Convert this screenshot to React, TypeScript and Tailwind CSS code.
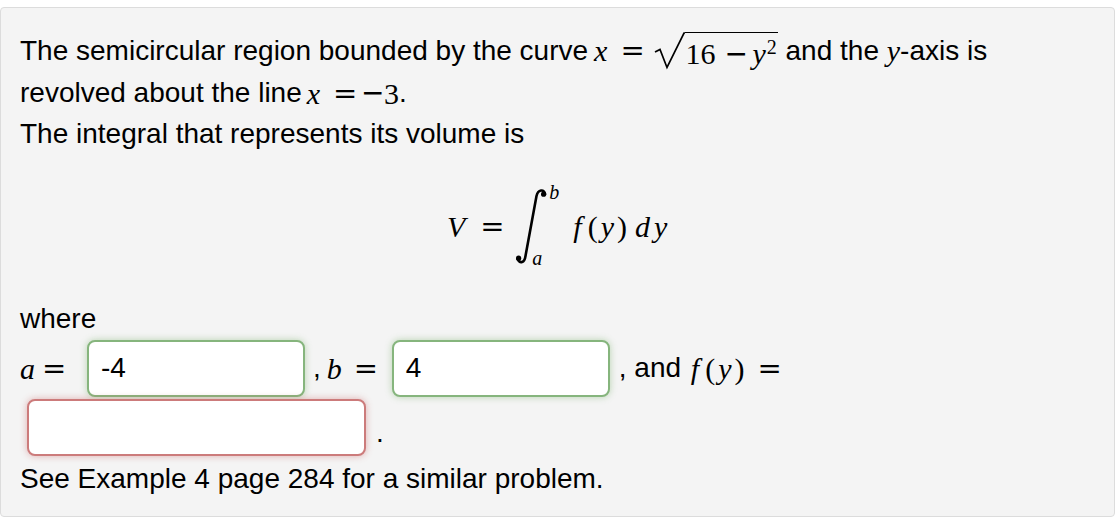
import React from "react";

const serif = { fontFamily: '"Liberation Serif", "DejaVu Serif", serif' };
const symFont = { fontFamily: '"DejaVu Sans", sans-serif' };

function MI({ children, className = "" }: { children: React.ReactNode; className?: string }) {
  return (
    <span className={"italic text-[30px] " + className} style={serif}>
      {children}
    </span>
  );
}
function MR({ children, className = "" }: { children: React.ReactNode; className?: string }) {
  return (
    <span className={"text-[30px] " + className} style={serif}>
      {children}
    </span>
  );
}
function Eq({ className = "" }: { className?: string }) {
  return (
    <span className={"inline-block w-[22px] text-center text-[29px] leading-none " + className} style={symFont}>
      =
    </span>
  );
}
function Minus({ className = "" }: { className?: string }) {
  return (
    <span className={"inline-block w-[20px] text-center text-[28px] leading-none " + className} style={symFont}>
      −
    </span>
  );
}

function Fy({ className = "" }: { className?: string }) {
  return (
    <span className={"inline-flex items-baseline " + className}>
      <MI>f</MI>
      <MR className="ml-[6px]">(</MR>
      <MI className="ml-[3px]">y</MI>
      <MR className="ml-[3px]">)</MR>
    </span>
  );
}

function Integral() {
  return (
    <svg width="32" height="76" viewBox="0 0 32 76" className="block">
      <path
        d="M30 6 C29 1 23 1 21.5 8 L10.5 68 C9.5 75 5 76 2.5 71"
        fill="none"
        stroke="#000"
        strokeWidth="2.6"
        strokeLinecap="round"
      />
      <circle cx="28.6" cy="6.2" r="2.6" />
      <circle cx="3.6" cy="70.2" r="2.6" />
    </svg>
  );
}

export default function App() {
  return (
    <div
      className="w-[1116px] h-[520px] bg-white pt-[7px]"
      style={{ fontFamily: '"Liberation Sans", Arial, sans-serif' }}
    >
      <div className="w-[1115px] h-[510px] bg-[#f4f4f4] border border-[#dcdcdc] rounded-[4px] pl-[19px] pt-[21px] text-[28px] text-black">
        {/* line 1 */}
        <div className="h-[43px] flex items-center whitespace-pre">
          <span>The semicircular region bounded by the curve</span>
          <MI className="ml-[6px]">x</MI>
          <Eq className="ml-[13px]" />
          <span className="relative inline-flex items-center ml-[12px] h-[43px]">
            <svg width="31" height="38" viewBox="0 0 31 38" className="block self-start mt-[3px]">
              <path d="M1 20 L6 17.5 L13 35.5 L30 1 L31 1" fill="none" stroke="#000" strokeWidth="1.7" />
            </svg>
            <span className="flex items-center self-start mt-[3px] h-[38px] border-t-[1.7px] border-black pr-[1px]">
              <MR className="mt-[4px]">16</MR>
              <Minus className="ml-[9px] mt-[4px]" />
              <MI className="ml-[8px] mt-[4px]">y</MI>
              <span className="text-[20px] leading-none self-start mt-[4px] ml-[1px]" style={serif}>
                2
              </span>
            </span>
          </span>
          <span> and the </span>
          <MI>y</MI>
          <span>-axis is</span>
        </div>
        {/* line 2 */}
        <div className="h-[42px] flex items-center whitespace-pre">
          <span>revolved about the line</span>
          <MI className="ml-[5px]">x</MI>
          <Eq className="ml-[13px]" />
          <Minus className="ml-[6px]" />
          <MR className="ml-[3px]">3</MR>
          <span>.</span>
        </div>
        {/* line 3 */}
        <div className="h-[40px] flex items-center whitespace-pre">The integral that represents its volume is</div>

        {/* display */}
        <div className="h-[144px] flex items-center pl-[427px] whitespace-pre">
          <MI>V</MI>
          <Eq className="ml-[15px]" />
          <span className="relative inline-block w-[42px] h-[76px] ml-[13px]">
            <Integral />
            <span className="absolute left-[34px] top-[-6px] italic text-[20px] leading-[20px]" style={serif}>
              b
            </span>
            <span className="absolute left-[17px] top-[60px] italic text-[20px] leading-[20px]" style={serif}>
              a
            </span>
          </span>
          <Fy className="ml-[16px]" />
          <MI className="ml-[8px]">d</MI>
          <MI className="ml-[4px]">y</MI>
        </div>

        <div className="h-[41px] flex items-center">where</div>

        <div className="h-[58px] flex items-center whitespace-pre">
          <MI>a</MI>
          <Eq className="ml-[7px]" />
          <div className="ml-[23px] w-[218px] h-[57px] bg-white border-2 border-[#86b57d] rounded-[8px] shadow-[0_0_7px_rgba(110,170,95,0.45)] flex items-center pl-[12px]">
            -4
          </div>
          <span className="ml-[8px]">,</span>
          <MI className="ml-[6px]">b</MI>
          <Eq className="ml-[12px]" />
          <div className="ml-[16px] w-[218px] h-[57px] bg-white border-2 border-[#86b57d] rounded-[8px] shadow-[0_0_7px_rgba(110,170,95,0.45)] flex items-center pl-[12px]">
            4
          </div>
          <span className="ml-[9px]">, and </span>
          <Fy className="ml-[2px]" />
          <Eq className="ml-[13px]" />
        </div>

        <div className="h-[57px] mt-[2px] flex items-center pl-[7px]">
          <div className="w-[339px] h-[57px] bg-white border-2 border-[#cc7b7b] rounded-[8px] shadow-[0_0_7px_rgba(200,90,90,0.45)]"></div>
          <span className="ml-[10px] mt-[10px]">.</span>
        </div>

        <div className="h-[46px] flex items-center">See Example 4 page 284 for a similar problem.</div>
      </div>
    </div>
  );
}
